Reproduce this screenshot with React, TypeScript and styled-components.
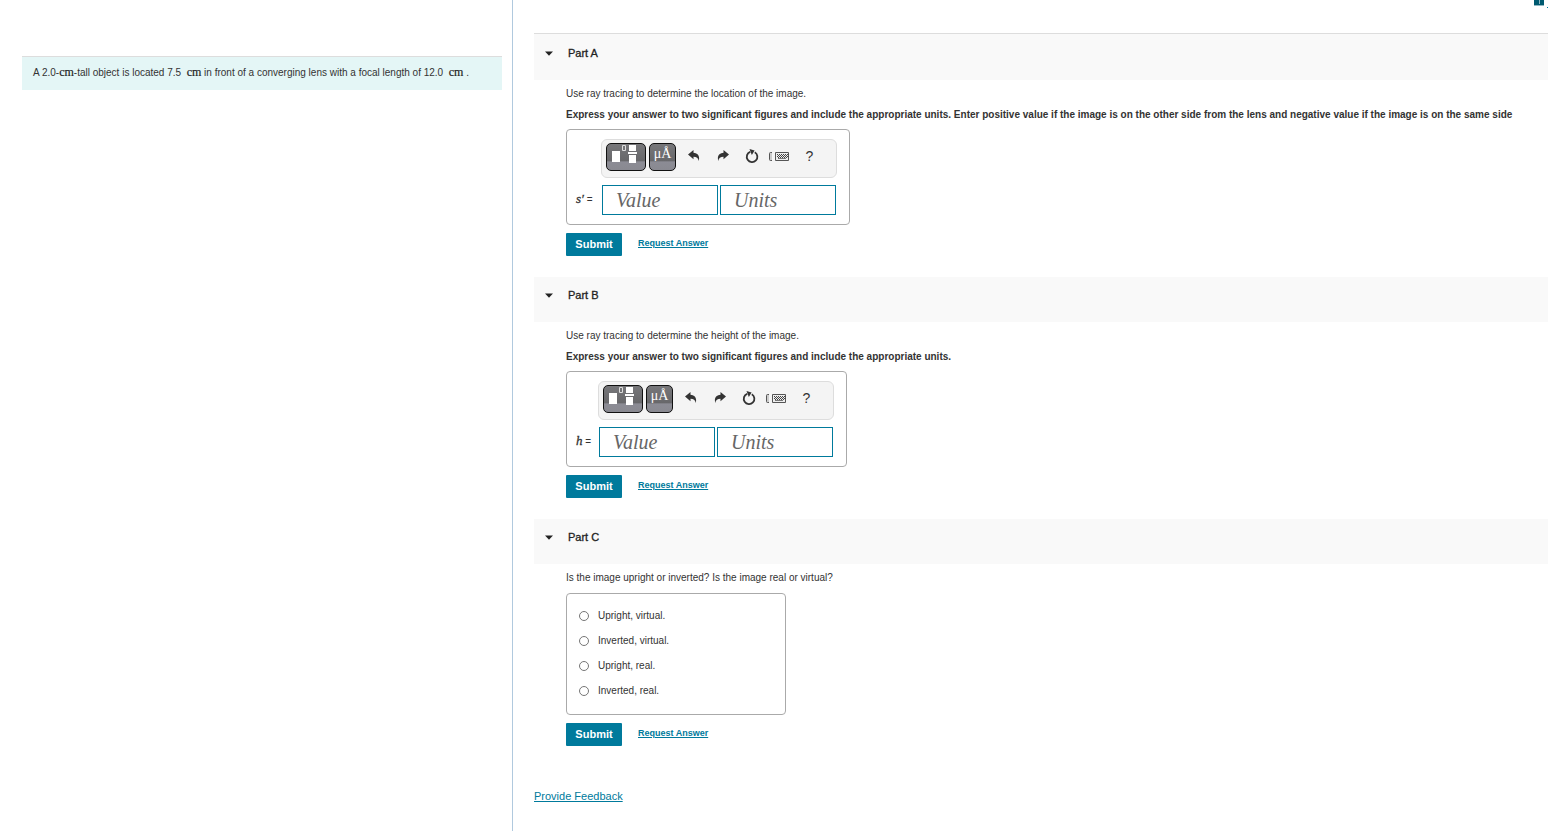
import React from "react";
import styled, { createGlobalStyle } from "styled-components";

const teal = "#007a9c";
const sans = '"Liberation Sans", Arial, sans-serif';
const serif = '"Liberation Serif", "Times New Roman", serif';

const GlobalStyle = createGlobalStyle`
  *, *::before, *::after { box-sizing: border-box; }
  html, body, #root { height: 100%; }
  body { margin: 0; background: #fff; color: #333; font: 10px/14px ${sans}; overflow: hidden; }
  h2, p { margin: 0; }
  a { color: ${teal}; text-decoration: underline; }
`;

const Page = styled.div`
  display: grid;
  grid-template-columns: minmax(0, 513fr) minmax(0, 1035fr);
  min-height: 100%;
`;

const ProblemPane = styled.aside`
  border-right: 1px solid #b0c9de;
  padding: 56px 10px 0 22px;
`;

const ProblemStatement = styled.p`
  border-top: 1px solid #ddd;
  background: #e4f6f6;
  padding: 9px 11px 10px;
  white-space: nowrap;
`;

const Unit = styled.span`
  font: 12px/12px ${serif};
  color: #222;
  -webkit-text-stroke: 0.2px #222;
`;

const WorkPane = styled.main`
  padding-left: 21px;
  min-width: 0;
`;

const TopBar = styled.header`
  height: 33px;
  display: flex;
  justify-content: flex-end;
  align-items: flex-start;
`;

const ReviewLink = styled.a`
  display: flex;
  svg { display: block; }
`;

const Section = styled.section`
  margin-bottom: 21px;
`;

const PartHeader = styled.header<{ $ruled?: boolean }>`
  height: ${(p) => (p.$ruled ? 47 : 45)}px;
  border-top: ${(p) => (p.$ruled ? "1px solid #ddd" : "0")};
  padding-top: ${(p) => (p.$ruled ? 12 : 11)}px;
  background: #f9f9f9;
`;

const PartToggle = styled.button`
  display: flex;
  align-items: center;
  gap: 15px;
  border: 0;
  padding: 0 11px;
  background: none;
  color: #222;
  font: 11px/14px ${sans};
  -webkit-text-stroke: 0.3px #222;
`;

const PartBody = styled.div`
  padding: 7px 0 0 32px;
`;

const Question = styled.p`
  line-height: 14px;
`;

const Instruction = styled.p`
  margin-top: 7px;
  font-weight: bold;
  white-space: nowrap;
  overflow: hidden;
`;

const AnswerBox = styled.div`
  width: fit-content;
  margin-top: 7px;
  border: 1px solid #aaa;
  border-radius: 4px;
  padding: 9px 12px 9px 9px;
  display: grid;
  grid-template-columns: auto auto;
  row-gap: 7px;
`;

const Toolbar = styled.div`
  grid-column: 2;
  width: 236px;
  height: 39px;
  border: 1px solid #ddd;
  border-radius: 6px;
  background: #f4f4f4;
  padding: 3px 4px;
  display: flex;
  align-items: flex-start;
  gap: 3px;
`;

const PaletteButton = styled.button<{ $width: number }>`
  flex: none;
  width: ${(p) => p.$width}px;
  height: 28px;
  border: 1px solid #111;
  border-radius: 5px;
  padding: 0;
  background: linear-gradient(#77777a 0, #67676a 66%, #8c8c95 68%, #898991 100%);
  color: #fff;
  font: 14px/19px ${serif};
  display: flex;
  justify-content: center;
  align-items: flex-start;
  overflow: hidden;
`;

const ToolGroup = styled.div`
  display: flex;
  align-items: center;
  height: 26px;
`;

const ToolButton = styled.button`
  width: 29px;
  height: 26px;
  border: 0;
  padding: 0;
  background: none;
  color: #333;
  font: 14px/26px ${sans};
  display: flex;
  align-items: center;
  justify-content: center;
`;

const FieldLabel = styled.div<{ $width: number }>`
  width: ${(p) => p.$width}px;
  padding-top: 7px;
  font: 10px/14px ${sans};
  white-space: nowrap;
`;

const Variable = styled.i`
  font: italic 13px/14px ${serif};
  -webkit-text-stroke: 0.3px #333;
`;

const Fields = styled.div`
  display: flex;
  gap: 2px;
  padding: 0 1px;
`;

const Field = styled.input`
  width: 116px;
  height: 30px;
  border: 1px solid ${teal};
  border-radius: 0;
  padding: 0 13px;
  background: #fff;
  font: italic 20px/28px ${serif};
  &::placeholder { color: #666; opacity: 1; }
`;

const Actions = styled.div`
  margin-top: 8px;
  display: flex;
  align-items: flex-start;
  gap: 16px;
`;

const Submit = styled.button`
  width: 56px;
  height: 23px;
  border: 0;
  border-radius: 1px;
  padding: 0;
  background: ${teal};
  color: #fff;
  font: bold 11px/23px ${sans};
`;

const RequestLink = styled.a`
  font: bold 9px/21px ${sans};
`;

const Choices = styled.fieldset`
  width: 220px;
  height: 122px;
  margin: 8px 0 0;
  border: 1px solid #aaa;
  border-radius: 4px;
  padding: 15px 12px;
  display: flex;
  flex-direction: column;
  gap: 11px;
`;

const Choice = styled.label`
  display: flex;
  align-items: center;
  gap: 9px;
  line-height: 14px;
`;

const Radio = styled.input`
  appearance: none;
  width: 10px;
  height: 10px;
  margin: 0;
  border: 1px solid #767676;
  border-radius: 50%;
  background: #fff;
  &:checked { background: ${teal}; }
`;

const Feedback = styled.a`
  display: inline-block;
  margin-top: 21px;
  font: 11px/16px ${sans};
`;

const TemplateIcon = () => (
  <svg width="28" height="22" viewBox="0 0 28 22">
    <path fill="#fff" d="M0 7h8v11H0zM17 1h7v6h-7zM17 11h7v8h-7zM16 8h9v2h-9z" />
    <path fill="none" stroke="#ddd" d="M10.500 1.500h3v5h-3z" />
  </svg>
);

const UndoIcon = () => (
  <svg width="12" height="12" viewBox="0 0 12 12">
    <path fill="#333" d="M0 4.500 5.500 0v2.800c4 .2 6.700 3.200 5.200 8.200-.4-3-2.200-4.300-5.200-4.300v2.600z" />
  </svg>
);

const RedoIcon = () => (
  <svg width="12" height="12" viewBox="0 0 12 12">
    <path fill="#333" d="M12 4.500 6.500 0v2.800c-4 .2-6.700 3.200-5.200 8.200.4-3 2.200-4.300 5.200-4.300v2.600z" />
  </svg>
);

const ResetIcon = () => (
  <svg width="14" height="15" viewBox="0 0 14 15">
    <path fill="none" stroke="#333" strokeWidth="1.800" d="M9.800 3.200A5.300 5.300 0 1 1 5.200 2.800" />
    <path fill="#333" d="M4.500 0 9.600 1.600 6.800 6z" />
  </svg>
);

const KeyboardIcon = () => (
  <svg width="24" height="12" viewBox="0 0 24 12">
    <path fill="#ccc" stroke="#555" d="M3 2.500H1.500q-1 0-1 1v6q0 1 1 1H3" />
    <path fill="#eee" stroke="#555" d="M6.500 2.500h13v8h-13z" />
    <path fill="none" stroke="#444" strokeDasharray="1 1" d="M8 4.500h11M9 5.500h10M8 6.500h11M9 7.500h10" />
    <path stroke="#777" d="M9 8.500h8" />
  </svg>
);

const BookIcon = () => (
  <svg width="14" height="8" viewBox="0 0 14 8">
    <path fill="#005a70" d="M0 0h10v5H0z" />
    <path fill="#8fb7c2" d="M5 0h1v4H5zM0 5h10v1H0z" />
    <path fill={teal} d="M13 7h1v1h-1z" />
  </svg>
);

const Caret = () => (
  <svg width="8" height="5" viewBox="0 0 8 5">
    <path fill="#222" d="M0 .5h8L4 4.800z" />
  </svg>
);

function Part({ name, ruled, children }: { name: string; ruled?: boolean; children: React.ReactNode }) {
  return (
    <Section>
      <PartHeader $ruled={ruled}>
        <h2>
          <PartToggle type="button" aria-expanded="true">
            <Caret />
            {name}
          </PartToggle>
        </h2>
      </PartHeader>
      <PartBody>
        {children}
        <Actions>
          <Submit type="button">Submit</Submit>
          <RequestLink href="#">Request Answer</RequestLink>
        </Actions>
      </PartBody>
    </Section>
  );
}

function ValueWithUnits({ symbol, labelWidth }: { symbol: string; labelWidth: number }) {
  return (
    <AnswerBox>
      <Toolbar role="toolbar">
        <PaletteButton type="button" $width={40} aria-label="Templates">
          <TemplateIcon />
        </PaletteButton>
        <PaletteButton type="button" $width={27}>μÅ</PaletteButton>
        <ToolGroup>
          <ToolButton type="button" aria-label="Undo"><UndoIcon /></ToolButton>
          <ToolButton type="button" aria-label="Redo"><RedoIcon /></ToolButton>
          <ToolButton type="button" aria-label="Reset"><ResetIcon /></ToolButton>
          <ToolButton type="button" aria-label="Keyboard shortcuts"><KeyboardIcon /></ToolButton>
          <ToolButton type="button">?</ToolButton>
        </ToolGroup>
      </Toolbar>
      <FieldLabel $width={labelWidth}>
        <Variable>{symbol}</Variable> =
      </FieldLabel>
      <Fields>
        <Field placeholder="Value" aria-label={`${symbol} value`} />
        <Field placeholder="Units" aria-label={`${symbol} units`} />
      </Fields>
    </AnswerBox>
  );
}

const choices = ["Upright, virtual.", "Inverted, virtual.", "Upright, real.", "Inverted, real."];

export default function App() {
  return (
    <>
      <GlobalStyle />
      <Page>
        <ProblemPane>
          <ProblemStatement>
            A 2.0-<Unit>cm</Unit>-tall object is located 7.5 &nbsp;<Unit>cm</Unit> in front of a converging lens
            with a focal length of 12.0 &nbsp;<Unit>cm</Unit> .
          </ProblemStatement>
        </ProblemPane>
        <WorkPane>
          <TopBar>
            <ReviewLink href="#" aria-label="Review"><BookIcon /></ReviewLink>
          </TopBar>
          <Part name="Part A" ruled>
            <Question>Use ray tracing to determine the location of the image.</Question>
            <Instruction>
              Express your answer to two significant figures and include the appropriate units. Enter positive value
              if the image is on the other side from the lens and negative value if the image is on the same side
            </Instruction>
            <ValueWithUnits symbol="s′" labelWidth={25} />
          </Part>
          <Part name="Part B">
            <Question>Use ray tracing to determine the height of the image.</Question>
            <Instruction>
              Express your answer to two significant figures and include the appropriate units.
            </Instruction>
            <ValueWithUnits symbol="h" labelWidth={22} />
          </Part>
          <Part name="Part C">
            <Question>Is the image upright or inverted? Is the image real or virtual?</Question>
            <Choices aria-label="Image orientation and type">
              {choices.map((text) => (
                <Choice key={text}>
                  <Radio type="radio" name="image-type" />
                  {text}
                </Choice>
              ))}
            </Choices>
          </Part>
          <Feedback href="#">Provide Feedback</Feedback>
        </WorkPane>
      </Page>
    </>
  );
}
